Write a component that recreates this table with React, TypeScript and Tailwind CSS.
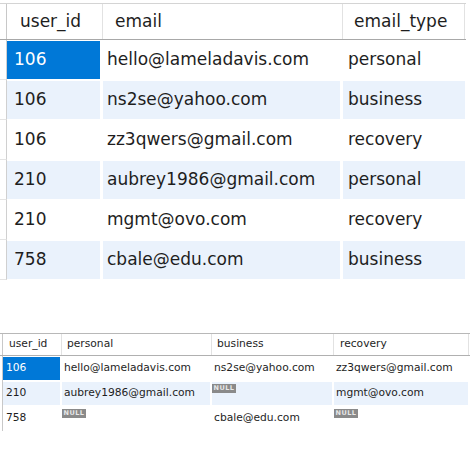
import React from "react";

const emails = [
  ["106", "hello@lameladavis.com", "personal"],
  ["106", "ns2se@yahoo.com", "business"],
  ["106", "zz3qwers@gmail.com", "recovery"],
  ["210", "aubrey1986@gmail.com", "personal"],
  ["210", "mgmt@ovo.com", "recovery"],
  ["758", "cbale@edu.com", "business"],
];

const pivot: (string | null)[][] = [
  ["106", "hello@lameladavis.com", "ns2se@yahoo.com", "zz3qwers@gmail.com"],
  ["210", "aubrey1986@gmail.com", null, "mgmt@ovo.com"],
  ["758", null, "cbale@edu.com", null],
];

const NullBadge = () => (
  <span className="mt-[2px] flex h-[9px] w-[24px] items-center justify-center self-start bg-[#8a8a8a] text-[6.5px] font-bold leading-none tracking-[0.5px] text-[#e8e8e8]">
    NULL
  </span>
);

const App = () => {
  return (
    <div
      className="h-[474px] w-[474px] overflow-hidden bg-white text-[#1e1e1e]"
      style={{ fontFamily: '"DejaVu Sans", Verdana, sans-serif' }}
    >
      {/* first result grid */}
      <div className="pt-[3px] text-[17px]">
        <div className="flex h-[37px] w-[466px] border-y border-t-[#d4d4d4] border-b-[#a8a8a8]">
          <div className="w-[7px] border-r border-[#c8c8c8]" />
          <div className="flex w-[95px] items-center pl-[13px]">user_id</div>
          <div className="flex w-[240px] items-center border-l border-[#e2e2e2] pl-[12px]">email</div>
          <div className="flex w-[123px] items-center border-x border-[#e2e2e2] pl-[11px]">email_type</div>
        </div>
        {emails.map((row, i) => {
          const band = i % 2 === 1 ? "bg-[#eaf2fc]" : "bg-white";
          return (
            <div key={i} className="flex h-[40px]">
              <div className="w-[7px] border-r border-b border-[#d0d0d0] border-b-[#e4e4e4]" />
              <div
                className={`my-px flex w-[93px] items-center pl-[7px] ${
                  i === 0 ? "bg-[#0078d7] text-white" : band
                }`}
              >
                {row[0]}
              </div>
              <div className={`my-px ml-[3px] flex w-[237px] items-center pl-[4px] ${band}`}>{row[1]}</div>
              <div className={`my-px ml-[3px] flex w-[122px] items-center pl-[5px] ${band}`}>{row[2]}</div>
            </div>
          );
        })}
      </div>

      {/* pivoted result grid */}
      <div className="mt-[53px] text-[10.7px]">
        <div className="flex h-[23px] w-[470px] border-y border-t-[#b8b8b8] border-b-[#b0b0b0]">
          <div className="w-[3px] border-r border-[#c8c8c8]" />
          <div className="flex w-[58px] items-center pl-[6px]">user_id</div>
          <div className="flex w-[150px] items-center border-l border-[#e2e2e2] pl-[5px]">personal</div>
          <div className="flex w-[122px] items-center border-l border-[#e2e2e2] pl-[5px]">business</div>
          <div className="flex w-[136px] items-center border-x border-[#e2e2e2] pl-[6px]">recovery</div>
        </div>
        {pivot.map((row, i) => {
          const band = i % 2 === 1 ? "bg-[#eaf2fc]" : "bg-white";
          return (
            <div key={i} className="flex h-[25px]">
              <div className="w-[3px] border-r border-[#c8c8c8]" />
              <div
                className={`my-px flex w-[57px] items-center pl-[3px] ${
                  i === 0 ? "bg-[#0078d7] text-white" : band
                }`}
              >
                {row[0]}
              </div>
              {row.slice(1).map((cell, j) => (
                <div
                  key={j}
                  className={`my-px ml-[2px] flex items-center ${band} ${
                    j === 0 ? "w-[148px]" : j === 1 ? "w-[120px]" : "w-[134px]"
                  } ${cell ? "pl-[2px]" : ""}`}
                >
                  {cell ?? <NullBadge />}
                </div>
              ))}
            </div>
          );
        })}
      </div>
    </div>
  );
};

export default App;
